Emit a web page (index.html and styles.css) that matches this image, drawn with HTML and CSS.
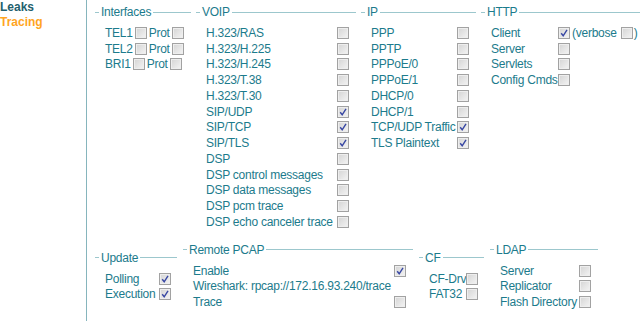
FILE: index.html
```html
<!DOCTYPE html>
<html lang="en">
<head>
    <meta charset="UTF-8">
    <meta name="viewport" content="width=device-width, initial-scale=1.0">
    <title>Leaks / Tracing</title>
    <link rel="stylesheet" href="styles.css">
</head>
<body>
    <div class="page">
        <nav class="side">
            <div class="side-item leaks">Leaks</div>
            <div class="side-item tracing">Tracing</div>
        </nav>

        <main class="main">
            <div class="row top">
                <section class="group g-ifaces">
                    <div class="legend"><span>Interfaces</span></div>
                    <div class="ifaces">
                        <div class="iface">TEL1<span class="cb"></span>Prot<span class="cb"></span></div>
                        <div class="iface">TEL2<span class="cb"></span>Prot<span class="cb"></span></div>
                        <div class="iface">BRI1<span class="cb"></span>Prot<span class="cb"></span></div>
                    </div>
                </section>

                <section class="group g-voip">
                    <div class="legend"><span>VOIP</span></div>
                    <div class="list">
                        <span>H.323/RAS</span><span class="cb"></span>
                        <span>H.323/H.225</span><span class="cb"></span>
                        <span>H.323/H.245</span><span class="cb"></span>
                        <span>H.323/T.38</span><span class="cb"></span>
                        <span>H.323/T.30</span><span class="cb"></span>
                        <span>SIP/UDP</span><span class="cb on"><svg viewBox="0 0 10 10"><path d="M2.2 5.2l2 2.6 3.8-6"/></svg></span>
                        <span>SIP/TCP</span><span class="cb on"><svg viewBox="0 0 10 10"><path d="M2.2 5.2l2 2.6 3.8-6"/></svg></span>
                        <span>SIP/TLS</span><span class="cb on"><svg viewBox="0 0 10 10"><path d="M2.2 5.2l2 2.6 3.8-6"/></svg></span>
                        <span>DSP</span><span class="cb"></span>
                        <span>DSP control messages</span><span class="cb"></span>
                        <span>DSP data messages</span><span class="cb"></span>
                        <span>DSP pcm trace</span><span class="cb"></span>
                        <span>DSP echo canceler trace</span><span class="cb"></span>
                    </div>
                </section>

                <section class="group g-ip">
                    <div class="legend"><span>IP</span></div>
                    <div class="list">
                        <span>PPP</span><span class="cb"></span>
                        <span>PPTP</span><span class="cb"></span>
                        <span>PPPoE/0</span><span class="cb"></span>
                        <span>PPPoE/1</span><span class="cb"></span>
                        <span>DHCP/0</span><span class="cb"></span>
                        <span>DHCP/1</span><span class="cb"></span>
                        <span>TCP/UDP Traffic</span><span class="cb on"><svg viewBox="0 0 10 10"><path d="M2.2 5.2l2 2.6 3.8-6"/></svg></span>
                        <span>TLS Plaintext</span><span class="cb on"><svg viewBox="0 0 10 10"><path d="M2.2 5.2l2 2.6 3.8-6"/></svg></span>
                    </div>
                </section>

                <section class="group g-http">
                    <div class="legend"><span>HTTP</span></div>
                    <div class="list">
                        <span>Client</span>
                        <span class="opts"><span class="cb on"><svg viewBox="0 0 10 10"><path d="M2.2 5.2l2 2.6 3.8-6"/></svg></span>(verbose <span class="cb"></span>)</span>
                        <span>Server</span><span class="cb"></span>
                        <span>Servlets</span><span class="cb"></span>
                        <span>Config Cmds</span><span class="cb"></span>
                    </div>
                </section>
            </div>

            <div class="row bottom">
                <section class="group g-update">
                    <div class="legend"><span>Update</span></div>
                    <div class="list">
                        <span>Polling</span><span class="cb on"><svg viewBox="0 0 10 10"><path d="M2.2 5.2l2 2.6 3.8-6"/></svg></span>
                        <span>Execution</span><span class="cb on"><svg viewBox="0 0 10 10"><path d="M2.2 5.2l2 2.6 3.8-6"/></svg></span>
                    </div>
                </section>

                <section class="group g-pcap">
                    <div class="legend"><span>Remote PCAP</span></div>
                    <div class="list">
                        <span>Enable</span><span class="cb on"><svg viewBox="0 0 10 10"><path d="M2.2 5.2l2 2.6 3.8-6"/></svg></span>
                        <span class="wide">Wireshark: rpcap://172.16.93.240/trace</span>
                        <span>Trace</span><span class="cb"></span>
                    </div>
                </section>

                <section class="group g-cf">
                    <div class="legend"><span>CF</span></div>
                    <div class="list">
                        <span>CF-Drv</span><span class="cb"></span>
                        <span>FAT32</span><span class="cb"></span>
                    </div>
                </section>

                <section class="group g-ldap">
                    <div class="legend"><span>LDAP</span></div>
                    <div class="list">
                        <span>Server</span><span class="cb"></span>
                        <span>Replicator</span><span class="cb"></span>
                        <span>Flash Directory</span><span class="cb"></span>
                    </div>
                </section>
            </div>
        </main>
    </div>
</body>
</html>
```

FILE: styles.css
```css
body {
    margin: 0;
    padding: 0;
    background-color: #ffffff;
    font-family: "Liberation Sans", Arial, sans-serif;
    font-size: 12px;
    color: #1c7b8c;
}

.page {
    display: flex;
    min-height: 321px;
}

.side {
    width: 86px;
    border-right: 1px solid #86b5bd;
    flex-shrink: 0;
}

.side-item {
    font-weight: bold;
    line-height: 15px;
}

.side .leaks {
    color: #23606d;
}

.side .tracing {
    color: #ffa51f;
}

.main {
    flex: 1;
    padding-left: 8px;
    letter-spacing: -0.25px;
}

.row {
    display: flex;
}

.row.top {
    padding-top: 4px;
    gap: 5px;
    align-items: flex-start;
}

.row.bottom {
    margin-top: 12px;
    gap: 6px;
    align-items: center;
}

/* legend with a rule on both sides */
.legend {
    display: flex;
    align-items: center;
    height: 16px;
}

.legend::before {
    content: "";
    width: 4px;
    height: 1px;
    background-color: #9cc7cd;
    margin-right: 2px;
}

.legend::after {
    content: "";
    flex: 1;
    height: 1px;
    background-color: #9cc7cd;
    margin-left: 2px;
}

.legend span {
    white-space: nowrap;
}

.list {
    display: grid;
    grid-auto-rows: 15.75px;
    align-items: center;
    margin-top: 5px;
    padding-left: 10px;
    white-space: nowrap;
}

.ifaces {
    margin-top: 5px;
    padding-left: 10px;
}

.iface {
    display: flex;
    align-items: center;
    height: 15.75px;
    gap: 2px;
    white-space: nowrap;
}

.g-ifaces { width: 96px; }
.g-voip { width: 160px; }
.g-ip { width: 115px; }
.g-http { flex: 1; }

.g-voip .list { grid-template-columns: 131px auto; }
.g-ip .list { grid-template-columns: 86px auto; }
.g-http .list { grid-template-columns: 67px auto; }

.g-update { width: 82px; }
.g-pcap { width: 230px; }
.g-cf { width: 65px; }
.g-ldap { width: 108px; }

.g-update .list { grid-template-columns: 54px auto; }
.g-pcap .list { grid-template-columns: 201px auto; }
.g-cf .list { grid-template-columns: 37px auto; }
.g-ldap .list { grid-template-columns: 79px auto; }

.list .wide {
    grid-column: 1 / 3;
}

.opts {
    display: flex;
    align-items: center;
}

.opts .cb:first-child {
    margin-right: 2px;
}

.opts .cb:last-child {
    margin: 0 1px 0 4px;
}

/* checkbox */
.cb {
    display: inline-block;
    box-sizing: border-box;
    width: 12px;
    height: 12px;
    border: 1px solid #a2a2a2;
    background: linear-gradient(135deg, #d4d4d4, #f4f4f4);
    box-shadow: inset 0 0 0 1px #eeeeee;
    flex-shrink: 0;
}

.cb svg {
    display: block;
    width: 10px;
    height: 10px;
}

.cb svg path {
    fill: none;
    stroke: #3847a3;
    stroke-width: 1.4;
}
```
